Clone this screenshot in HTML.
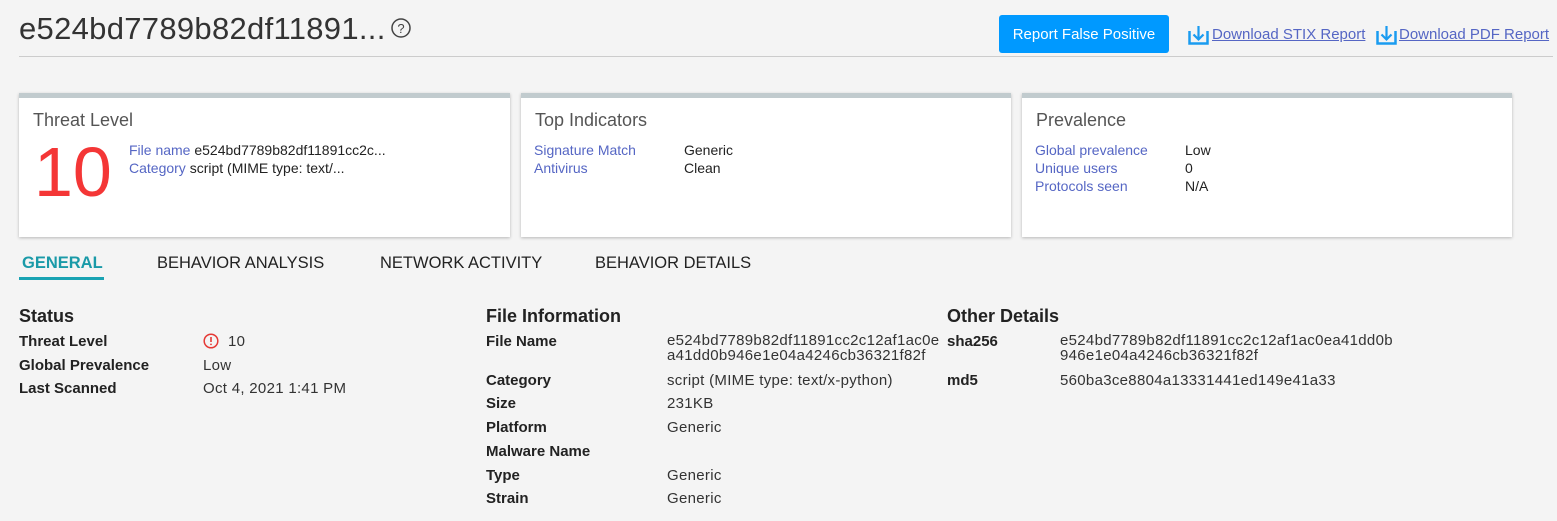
<!DOCTYPE html>
<html><head><meta charset="utf-8"><style>
body{margin:0;width:1557px;height:521px;background:#f4f4f4;font-family:"Liberation Sans",sans-serif;color:#222;position:relative;overflow:hidden}
.a{position:absolute;white-space:nowrap}
.card{position:absolute;top:93px;height:139px;background:#fff;border-top:5px solid #c1cbce;box-shadow:0 1px 3px rgba(0,0,0,.25)}
.ct{position:absolute;left:14px;top:12px;font-size:18px;color:#555}
.lk{color:#5566c4}
.v{font-size:14px;line-height:18px}
.h{font-size:18px;font-weight:bold;color:#222}
.l{font-size:15px;font-weight:bold;color:#222}
.t{font-size:15px;color:#333;letter-spacing:.3px}
.tab{font-size:16.5px}
</style></head><body>
<div class="a" style="left:19px;top:11px;font-size:31px;color:#333;letter-spacing:.3px">e524bd7789b82df11891...</div>
<svg class="a" style="left:390px;top:17px" width="22" height="22" viewBox="0 0 22 22"><circle cx="11" cy="11" r="9" fill="none" stroke="#444" stroke-width="1.5"/><text x="11" y="16" font-size="13" text-anchor="middle" fill="#444" font-family="Liberation Sans">?</text></svg>
<div class="a" style="left:999px;top:15px;width:170px;height:38px;background:#0099ff;border-radius:3px;color:#fff;font-size:15px;line-height:40px;text-align:center">Report False Positive</div>
<svg class="a" style="left:1188px;top:25px" width="21" height="20" viewBox="0 0 21 20"><path d="M1.5 6V18.5H19.5V6" fill="none" stroke="#1a9bf0" stroke-width="2.5"/><path d="M10.5 1V14M5.5 9.5L10.5 14.5L15.5 9.5" fill="none" stroke="#1a9bf0" stroke-width="2.2"/></svg>
<div class="a lk" style="left:1212px;top:26px;font-size:15px;text-decoration:underline">Download STIX Report</div>
<svg class="a" style="left:1376px;top:25px" width="21" height="20" viewBox="0 0 21 20"><path d="M1.5 6V18.5H19.5V6" fill="none" stroke="#1a9bf0" stroke-width="2.5"/><path d="M10.5 1V14M5.5 9.5L10.5 14.5L15.5 9.5" fill="none" stroke="#1a9bf0" stroke-width="2.2"/></svg>
<div class="a lk" style="left:1399px;top:26px;font-size:15px;text-decoration:underline">Download PDF Report</div>
<div class="a" style="left:19px;top:56px;width:1534px;height:1px;background:#ccc"></div>

<div class="card" style="left:19px;width:491px">
<div class="ct">Threat Level</div>
<div class="a" style="left:15px;top:34px;font-size:70px;color:#f43636;line-height:80px">10</div>
<div class="a v" style="left:110px;top:43px"><span class="lk">File name</span> e524bd7789b82df11891cc2c...<br><span class="lk">Category</span> script (MIME type: text/...</div>
</div>
<div class="card" style="left:521px;width:490px">
<div class="ct">Top Indicators</div>
<div class="a v lk" style="left:13px;top:43px">Signature Match<br>Antivirus</div>
<div class="a v" style="left:163px;top:43px">Generic<br>Clean</div>
</div>
<div class="card" style="left:1022px;width:490px">
<div class="ct">Prevalence</div>
<div class="a v lk" style="left:13px;top:43px">Global prevalence<br>Unique users<br>Protocols seen</div>
<div class="a v" style="left:163px;top:43px">Low<br>0<br>N/A</div>
</div>

<div class="a tab" style="left:22px;top:254px;font-weight:bold;color:#1a9aa8">GENERAL</div>
<div class="a" style="left:19px;top:277px;width:85px;height:3px;background:#1aa3b3"></div>
<div class="a tab" style="left:157px;top:254px">BEHAVIOR ANALYSIS</div>
<div class="a tab" style="left:380px;top:254px">NETWORK ACTIVITY</div>
<div class="a tab" style="left:595px;top:254px">BEHAVIOR DETAILS</div>

<div class="a h" style="left:19px;top:306px">Status</div>
<div class="a l" style="left:19px;top:333px">Threat Level</div>
<svg class="a" style="left:203px;top:333px" width="16" height="16" viewBox="0 0 16 16"><circle cx="8" cy="8" r="6.8" fill="none" stroke="#e53935" stroke-width="1.5"/><path d="M8 4V9" stroke="#e53935" stroke-width="1.6"/><circle cx="8" cy="11.4" r=".9" fill="#e53935"/></svg>
<div class="a t" style="left:228px;top:333px">10</div>
<div class="a l" style="left:19px;top:357px">Global Prevalence</div>
<div class="a t" style="left:203px;top:357px">Low</div>
<div class="a l" style="left:19px;top:380px">Last Scanned</div>
<div class="a t" style="left:203px;top:380px">Oct 4, 2021 1:41 PM</div>

<div class="a h" style="left:486px;top:306px">File Information</div>
<div class="a l" style="left:486px;top:333px">File Name</div>
<div class="a t" style="left:667px;top:333px;line-height:15px">e524bd7789b82df11891cc2c12af1ac0e<br>a41dd0b946e1e04a4246cb36321f82f</div>
<div class="a l" style="left:486px;top:372px">Category</div>
<div class="a t" style="left:667px;top:372px">script (MIME type: text/x-python)</div>
<div class="a l" style="left:486px;top:395px">Size</div>
<div class="a t" style="left:667px;top:395px">231KB</div>
<div class="a l" style="left:486px;top:419px">Platform</div>
<div class="a t" style="left:667px;top:419px">Generic</div>
<div class="a l" style="left:486px;top:443px">Malware Name</div>
<div class="a l" style="left:486px;top:467px">Type</div>
<div class="a t" style="left:667px;top:467px">Generic</div>
<div class="a l" style="left:486px;top:490px">Strain</div>
<div class="a t" style="left:667px;top:490px">Generic</div>

<div class="a h" style="left:947px;top:306px">Other Details</div>
<div class="a l" style="left:947px;top:333px">sha256</div>
<div class="a t" style="left:1060px;top:333px;line-height:15px">e524bd7789b82df11891cc2c12af1ac0ea41dd0b<br>946e1e04a4246cb36321f82f</div>
<div class="a l" style="left:947px;top:372px">md5</div>
<div class="a t" style="left:1060px;top:372px">560ba3ce8804a13331441ed149e41a33</div>
</body></html>
